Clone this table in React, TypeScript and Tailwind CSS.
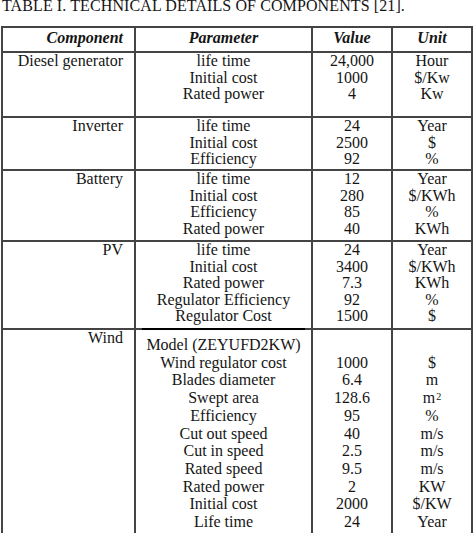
import type { ReactNode } from 'react'

type Group = {
  name: string
  height: string
  rows: [ReactNode, ReactNode, ReactNode][]
}

const groups: Group[] = [
  {
    name: 'Diesel generator',
    height: 'h-[65px]',
    rows: [
      ['life time', '24,000', 'Hour'],
      ['Initial cost', '1000', '$/Kw'],
      ['Rated power', '4', 'Kw'],
    ],
  },
  {
    name: 'Inverter',
    height: 'h-[53px]',
    rows: [
      ['life time', '24', 'Year'],
      ['Initial cost', '2500', '$'],
      ['Efficiency', '92', '%'],
    ],
  },
  {
    name: 'Battery',
    height: 'h-[71px]',
    rows: [
      ['life time', '12', 'Year'],
      ['Initial cost', '280', '$/KWh'],
      ['Efficiency', '85', '%'],
      ['Rated power', '40', 'KWh'],
    ],
  },
  {
    name: 'PV',
    height: 'h-[88px]',
    rows: [
      ['life time', '24', 'Year'],
      ['Initial cost', '3400', '$/KWh'],
      ['Rated power', '7.3', 'KWh'],
      ['Regulator Efficiency', '92', '%'],
      ['Regulator Cost', '1500', '$'],
    ],
  },
]

const wind: [ReactNode, ReactNode, ReactNode][] = [
  ['Model (ZEYUFD2KW)', '', ''],
  ['Wind regulator cost', '1000', '$'],
  ['Blades diameter', '6.4', 'm'],
  [
    'Swept area',
    '128.6',
    <span>
      m<span className="text-[10px] align-top relative -top-[1px] ml-[1px]">2</span>
    </span>,
  ],
  ['Efficiency', '95', '%'],
  ['Cut out speed', '40', 'm/s'],
  ['Cut in speed', '2.5', 'm/s'],
  ['Rated speed', '9.5', 'm/s'],
  ['Rated power', '2', 'KW'],
  ['Initial cost', '2000', '$/KW'],
  ['Life time', '24', 'Year'],
]

function Lines({ items, className }: { items: ReactNode[]; className: string }) {
  return (
    <div className={className}>
      {items.map((t, i) => (
        <div key={i} className="whitespace-nowrap">
          {t === '' ? '\u00a0' : t}
        </div>
      ))}
    </div>
  )
}

export default function App() {
  return (
    <div
      className="w-[474px] h-[533px] overflow-hidden bg-white text-[#151515] text-[16px]"
      style={{ fontFamily: '"Liberation Serif", "Times New Roman", serif' }}
    >
      {/* caption, top part cut off like the scan */}
      <div className="h-[26px] overflow-hidden">
        <div className="-mt-[4px] pl-[2px] leading-[20px] whitespace-nowrap tracking-[0.1px]">
          TABLE I. TECHNICAL DETAILS OF COMPONENTS [21].
        </div>
      </div>

      <div className="ml-[1px] w-[472px] border-2 border-b-0 border-[#444]">
        {/* header */}
        <div className="flex h-[25px] border-b-2 border-[#444] font-bold italic leading-[19px]">
          <div className="w-[133px] border-r-2 border-[#444] text-right pr-[11px]">Component</div>
          <div className="w-[177px] border-r-2 border-[#444] text-center">Parameter</div>
          <div className="w-[80px] border-r-2 border-[#444] text-center">Value</div>
          <div className="flex-1 text-center">Unit</div>
        </div>

        {groups.map((g) => (
          <div key={g.name} className={`flex ${g.height} border-b-2 border-[#444] leading-[16.5px]`}>
            <div className="w-[133px] border-r-2 border-[#444] text-right pr-[11px]">{g.name}</div>
            <Lines items={g.rows.map((r) => r[0])} className="w-[177px] border-r-2 border-[#444] text-center" />
            <Lines items={g.rows.map((r) => r[1])} className="w-[80px] border-r-2 border-[#444] text-center" />
            <Lines items={g.rows.map((r) => r[2])} className="flex-1 text-center" />
          </div>
        ))}

        {/* wind */}
        <div className="flex h-[210px]">
          <div className="w-[133px] border-r-2 border-[#444] text-right pr-[11px] leading-[15px]">Wind</div>
          <div className="w-[177px] border-r-2 border-[#444]">
            <div className="-mt-[2px] ml-[6px] mr-[6px] h-[2px] bg-black" />
            <Lines items={wind.map((r) => r[0])} className="mt-[6px] text-center leading-[17.7px]" />
          </div>
          <Lines items={wind.map((r) => r[1])} className="w-[80px] border-r-2 border-[#444] text-center pt-[6px] leading-[17.7px]" />
          <Lines items={wind.map((r) => r[2])} className="flex-1 text-center pt-[6px] leading-[17.7px]" />
        </div>
      </div>
    </div>
  )
}
